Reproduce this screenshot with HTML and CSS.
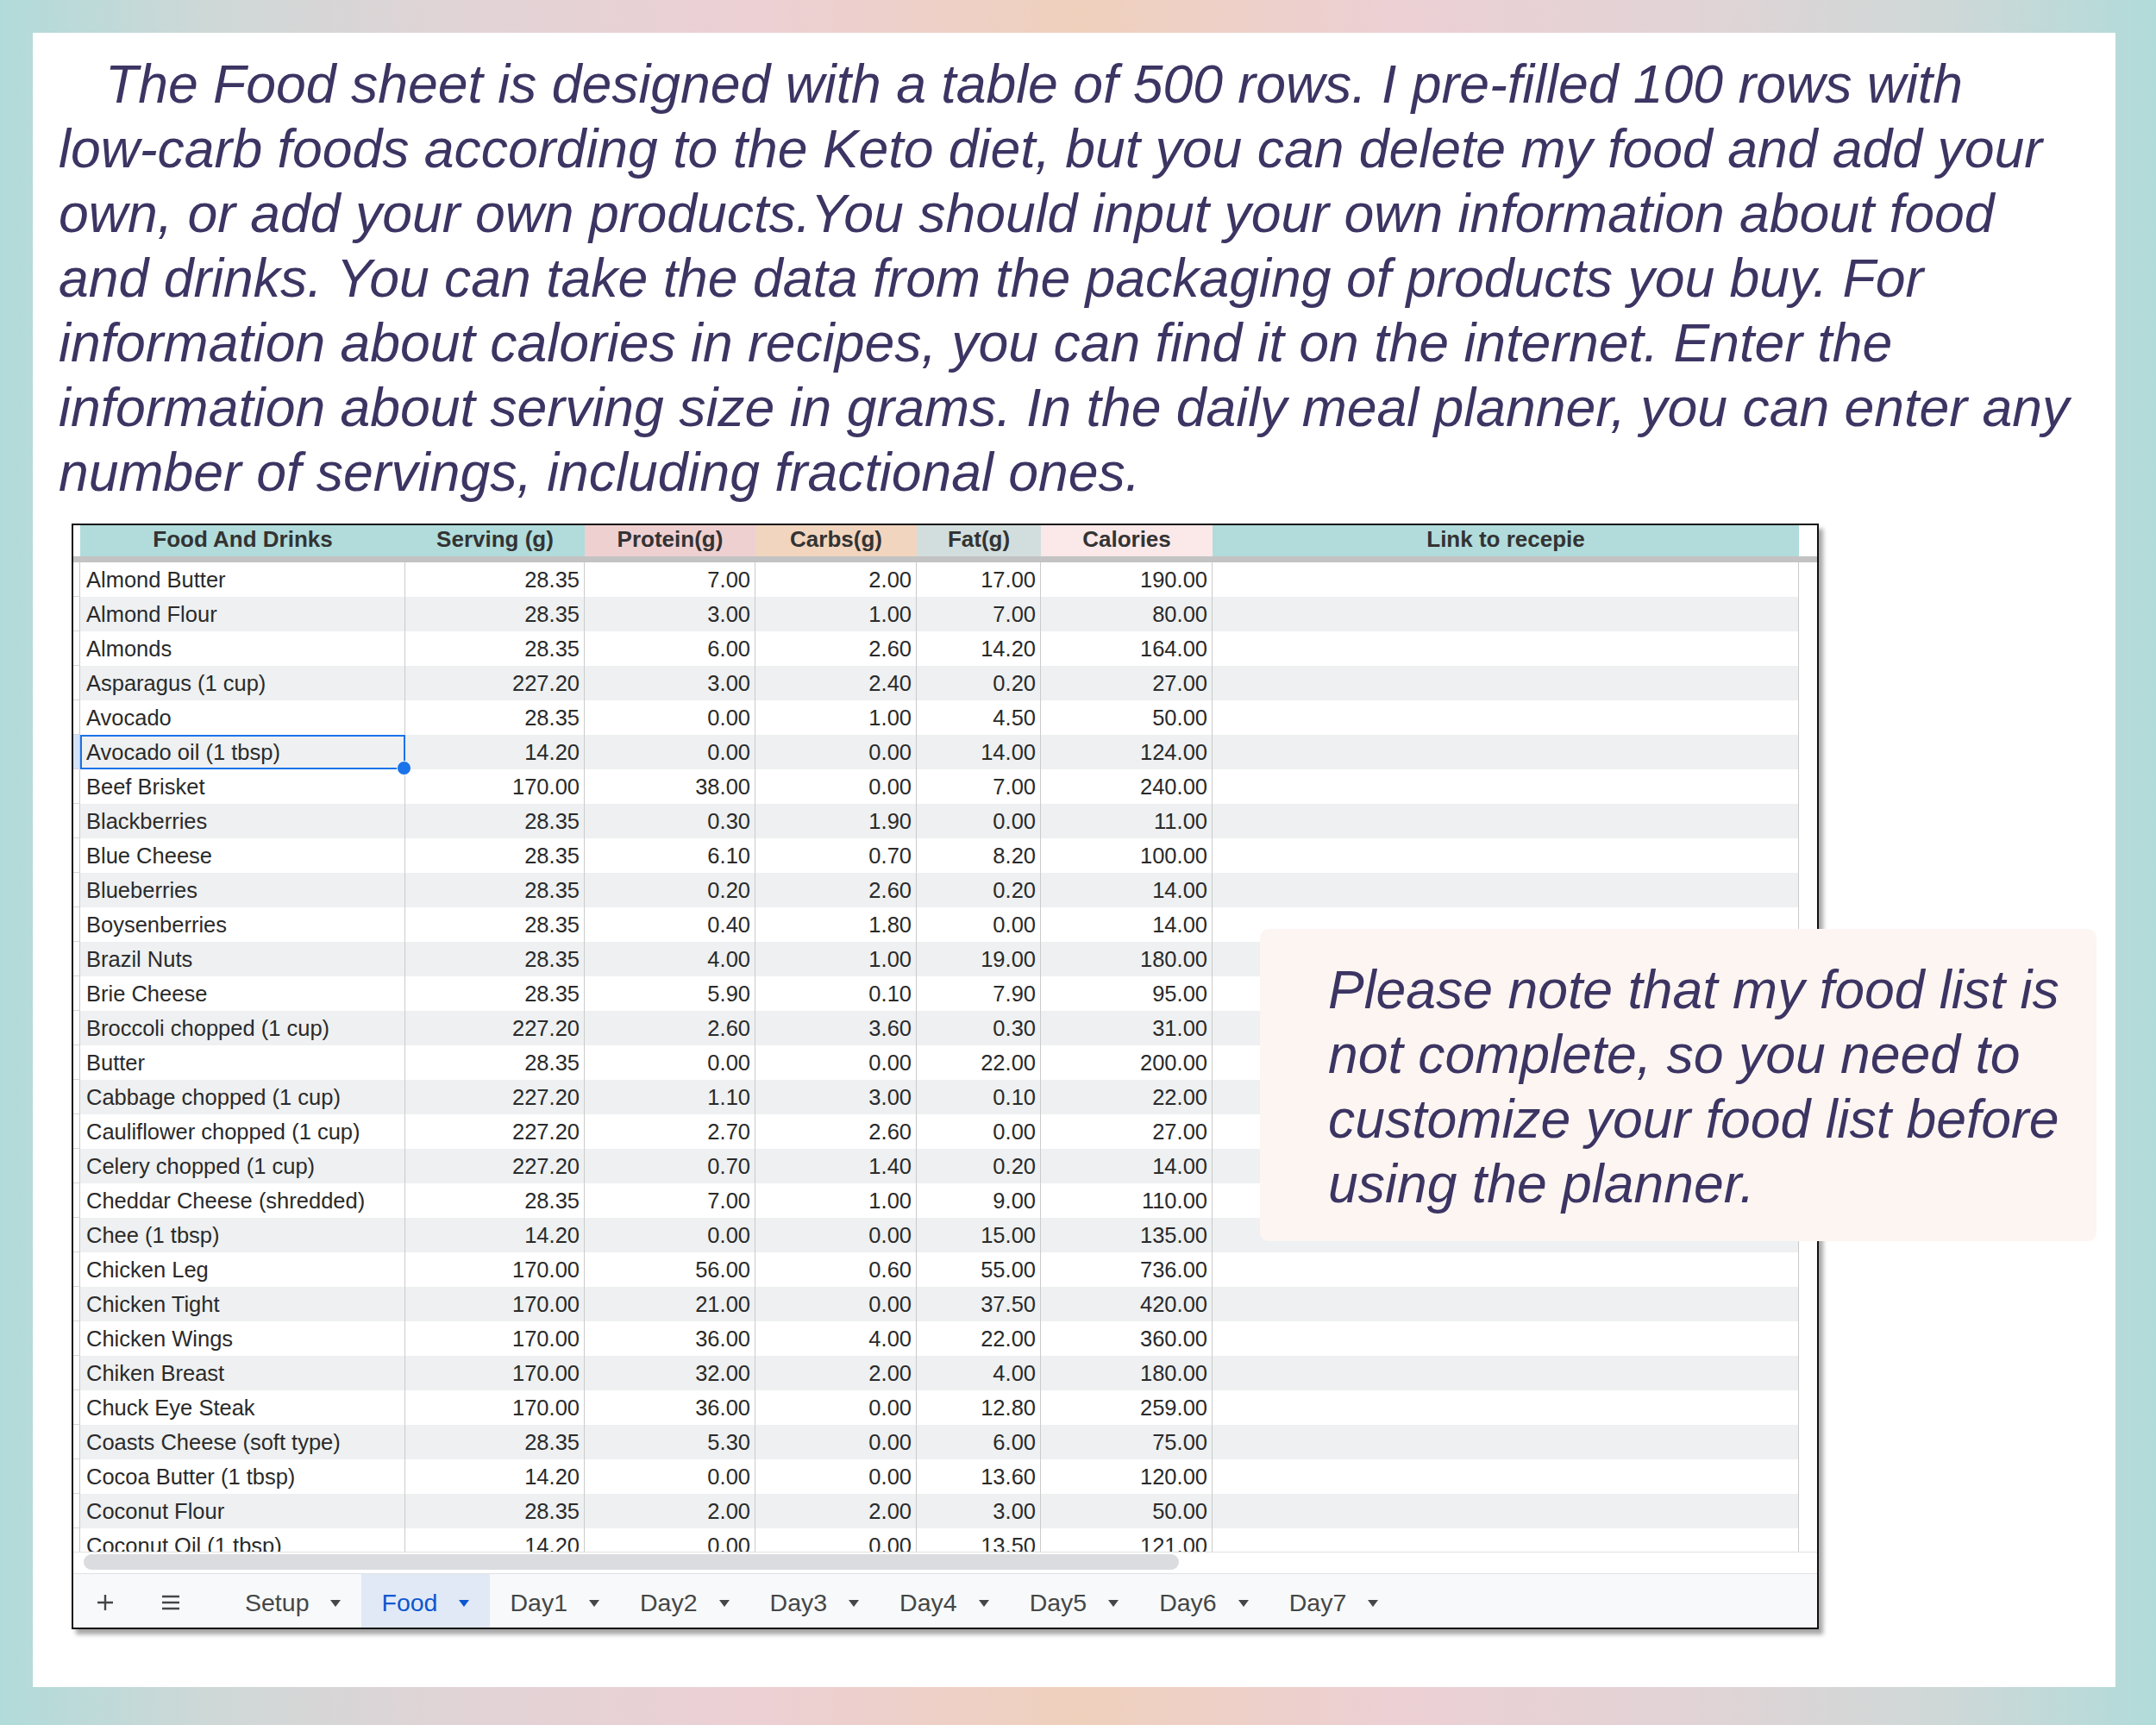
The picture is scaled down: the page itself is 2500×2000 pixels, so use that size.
FILE: index.html
```html
<!DOCTYPE html>
<html lang="en">
<head>
<meta charset="utf-8">
<title>Food sheet</title>
<link rel="stylesheet" href="styles.css">
</head>
<body>
<main class="card">
  <p class="intro">The Food sheet is designed with a table of 500 rows. I pre-filled 100 rows with<br>low-carb foods according to the Keto diet, but you can delete my food and add your<br>own, or add your own products.You should input your own information about food<br>and drinks. You can take the data from the packaging of products you buy. For<br>information about calories in recipes, you can find it on the internet. Enter the<br>information about serving size in grams. In the daily meal planner, you can enter any<br>number of servings, including fractional ones.</p>

  <section class="sheet">
    <div class="head">
      <div class="gut"></div>
      <div class="hd teal">Food And Drinks</div>
      <div class="hd teal">Serving (g)</div>
      <div class="hd rose">Protein(g)</div>
      <div class="hd peach">Carbs(g)</div>
      <div class="hd sage">Fat(g)</div>
      <div class="hd blush">Calories</div>
      <div class="hd teal">Link to recepie</div>
      <div class="gut-r"></div>
    </div>
    <div class="freeze"></div>
    <div class="rows">
      <div class="row"><div class="gut"></div><div class="c name">Almond Butter</div><div class="c">28.35</div><div class="c">7.00</div><div class="c">2.00</div><div class="c">17.00</div><div class="c">190.00</div><div class="c link"></div><div class="gut-r"></div></div>
      <div class="row"><div class="gut"></div><div class="c name">Almond Flour</div><div class="c">28.35</div><div class="c">3.00</div><div class="c">1.00</div><div class="c">7.00</div><div class="c">80.00</div><div class="c link"></div><div class="gut-r"></div></div>
      <div class="row"><div class="gut"></div><div class="c name">Almonds</div><div class="c">28.35</div><div class="c">6.00</div><div class="c">2.60</div><div class="c">14.20</div><div class="c">164.00</div><div class="c link"></div><div class="gut-r"></div></div>
      <div class="row"><div class="gut"></div><div class="c name">Asparagus (1 cup)</div><div class="c">227.20</div><div class="c">3.00</div><div class="c">2.40</div><div class="c">0.20</div><div class="c">27.00</div><div class="c link"></div><div class="gut-r"></div></div>
      <div class="row"><div class="gut"></div><div class="c name">Avocado</div><div class="c">28.35</div><div class="c">0.00</div><div class="c">1.00</div><div class="c">4.50</div><div class="c">50.00</div><div class="c link"></div><div class="gut-r"></div></div>
      <div class="row active"><div class="gut"></div><div class="c name selected">Avocado oil (1 tbsp)</div><div class="c">14.20</div><div class="c">0.00</div><div class="c">0.00</div><div class="c">14.00</div><div class="c">124.00</div><div class="c link"></div><div class="gut-r"></div></div>
      <div class="row"><div class="gut"></div><div class="c name">Beef Brisket</div><div class="c">170.00</div><div class="c">38.00</div><div class="c">0.00</div><div class="c">7.00</div><div class="c">240.00</div><div class="c link"></div><div class="gut-r"></div></div>
      <div class="row"><div class="gut"></div><div class="c name">Blackberries</div><div class="c">28.35</div><div class="c">0.30</div><div class="c">1.90</div><div class="c">0.00</div><div class="c">11.00</div><div class="c link"></div><div class="gut-r"></div></div>
      <div class="row"><div class="gut"></div><div class="c name">Blue Cheese</div><div class="c">28.35</div><div class="c">6.10</div><div class="c">0.70</div><div class="c">8.20</div><div class="c">100.00</div><div class="c link"></div><div class="gut-r"></div></div>
      <div class="row"><div class="gut"></div><div class="c name">Blueberries</div><div class="c">28.35</div><div class="c">0.20</div><div class="c">2.60</div><div class="c">0.20</div><div class="c">14.00</div><div class="c link"></div><div class="gut-r"></div></div>
      <div class="row"><div class="gut"></div><div class="c name">Boysenberries</div><div class="c">28.35</div><div class="c">0.40</div><div class="c">1.80</div><div class="c">0.00</div><div class="c">14.00</div><div class="c link"></div><div class="gut-r"></div></div>
      <div class="row"><div class="gut"></div><div class="c name">Brazil Nuts</div><div class="c">28.35</div><div class="c">4.00</div><div class="c">1.00</div><div class="c">19.00</div><div class="c">180.00</div><div class="c link"></div><div class="gut-r"></div></div>
      <div class="row"><div class="gut"></div><div class="c name">Brie Cheese</div><div class="c">28.35</div><div class="c">5.90</div><div class="c">0.10</div><div class="c">7.90</div><div class="c">95.00</div><div class="c link"></div><div class="gut-r"></div></div>
      <div class="row"><div class="gut"></div><div class="c name">Broccoli chopped (1 cup)</div><div class="c">227.20</div><div class="c">2.60</div><div class="c">3.60</div><div class="c">0.30</div><div class="c">31.00</div><div class="c link"></div><div class="gut-r"></div></div>
      <div class="row"><div class="gut"></div><div class="c name">Butter</div><div class="c">28.35</div><div class="c">0.00</div><div class="c">0.00</div><div class="c">22.00</div><div class="c">200.00</div><div class="c link"></div><div class="gut-r"></div></div>
      <div class="row"><div class="gut"></div><div class="c name">Cabbage chopped (1 cup)</div><div class="c">227.20</div><div class="c">1.10</div><div class="c">3.00</div><div class="c">0.10</div><div class="c">22.00</div><div class="c link"></div><div class="gut-r"></div></div>
      <div class="row"><div class="gut"></div><div class="c name">Cauliflower chopped (1 cup)</div><div class="c">227.20</div><div class="c">2.70</div><div class="c">2.60</div><div class="c">0.00</div><div class="c">27.00</div><div class="c link"></div><div class="gut-r"></div></div>
      <div class="row"><div class="gut"></div><div class="c name">Celery chopped (1 cup)</div><div class="c">227.20</div><div class="c">0.70</div><div class="c">1.40</div><div class="c">0.20</div><div class="c">14.00</div><div class="c link"></div><div class="gut-r"></div></div>
      <div class="row"><div class="gut"></div><div class="c name">Cheddar Cheese (shredded)</div><div class="c">28.35</div><div class="c">7.00</div><div class="c">1.00</div><div class="c">9.00</div><div class="c">110.00</div><div class="c link"></div><div class="gut-r"></div></div>
      <div class="row"><div class="gut"></div><div class="c name">Chee (1 tbsp)</div><div class="c">14.20</div><div class="c">0.00</div><div class="c">0.00</div><div class="c">15.00</div><div class="c">135.00</div><div class="c link"></div><div class="gut-r"></div></div>
      <div class="row"><div class="gut"></div><div class="c name">Chicken Leg</div><div class="c">170.00</div><div class="c">56.00</div><div class="c">0.60</div><div class="c">55.00</div><div class="c">736.00</div><div class="c link"></div><div class="gut-r"></div></div>
      <div class="row"><div class="gut"></div><div class="c name">Chicken Tight</div><div class="c">170.00</div><div class="c">21.00</div><div class="c">0.00</div><div class="c">37.50</div><div class="c">420.00</div><div class="c link"></div><div class="gut-r"></div></div>
      <div class="row"><div class="gut"></div><div class="c name">Chicken Wings</div><div class="c">170.00</div><div class="c">36.00</div><div class="c">4.00</div><div class="c">22.00</div><div class="c">360.00</div><div class="c link"></div><div class="gut-r"></div></div>
      <div class="row"><div class="gut"></div><div class="c name">Chiken Breast</div><div class="c">170.00</div><div class="c">32.00</div><div class="c">2.00</div><div class="c">4.00</div><div class="c">180.00</div><div class="c link"></div><div class="gut-r"></div></div>
      <div class="row"><div class="gut"></div><div class="c name">Chuck Eye Steak</div><div class="c">170.00</div><div class="c">36.00</div><div class="c">0.00</div><div class="c">12.80</div><div class="c">259.00</div><div class="c link"></div><div class="gut-r"></div></div>
      <div class="row"><div class="gut"></div><div class="c name">Coasts Cheese (soft type)</div><div class="c">28.35</div><div class="c">5.30</div><div class="c">0.00</div><div class="c">6.00</div><div class="c">75.00</div><div class="c link"></div><div class="gut-r"></div></div>
      <div class="row"><div class="gut"></div><div class="c name">Cocoa Butter (1 tbsp)</div><div class="c">14.20</div><div class="c">0.00</div><div class="c">0.00</div><div class="c">13.60</div><div class="c">120.00</div><div class="c link"></div><div class="gut-r"></div></div>
      <div class="row"><div class="gut"></div><div class="c name">Coconut Flour</div><div class="c">28.35</div><div class="c">2.00</div><div class="c">2.00</div><div class="c">3.00</div><div class="c">50.00</div><div class="c link"></div><div class="gut-r"></div></div>
      <div class="row"><div class="gut"></div><div class="c name">Coconut Oil (1 tbsp)</div><div class="c">14.20</div><div class="c">0.00</div><div class="c">0.00</div><div class="c">13.50</div><div class="c">121.00</div><div class="c link"></div><div class="gut-r"></div></div>
    </div>
    <div class="hscroll"><div class="thumb"></div></div>
    <nav class="tabs">
      <span class="tool">
        <svg width="22" height="22" viewBox="0 0 22 22"><path d="M11 2v18M2 11h18" stroke="#444746" stroke-width="2.4"/></svg>
      </span>
      <span class="tool menu">
        <svg width="24" height="20" viewBox="0 0 24 20"><path d="M2 3h20M2 10h20M2 17h20" stroke="#444746" stroke-width="2.4"/></svg>
      </span>
      <span class="tab">Setup<i class="caret"></i></span>
      <span class="tab current">Food<i class="caret"></i></span>
      <span class="tab">Day1<i class="caret"></i></span>
      <span class="tab">Day2<i class="caret"></i></span>
      <span class="tab">Day3<i class="caret"></i></span>
      <span class="tab">Day4<i class="caret"></i></span>
      <span class="tab">Day5<i class="caret"></i></span>
      <span class="tab">Day6<i class="caret"></i></span>
      <span class="tab">Day7<i class="caret"></i></span>
    </nav>
  </section>

  <aside class="note">Please note that my food list is<br>not complete, so you need to<br>customize your food list before<br>using the planner.</aside>
</main>
</body>
</html>
```

FILE: styles.css
```css
* { box-sizing: border-box; }

html, body { margin: 0; }

body {
  width: 2500px;
  height: 2000px;
  padding: 38px;
  background: linear-gradient(to right,
    #b1dbda 0%, #cfd8d7 10%, #e2d3d6 22%, #ecd0d4 35%,
    #efd0bd 50%, #ecd0d4 65%, #e2d3d6 78%, #cfd8d7 90%, #b1dbda 100%);
  font-family: "Liberation Sans", Arial, sans-serif;
}

.card {
  position: relative;
  width: 2415px;
  height: 1918px;
  background: #ffffff;
  padding: 22px 30px;
}

.intro {
  margin: 0;
  font-size: 62.5px;
  line-height: 75px;
  font-style: italic;
  color: #3c3563;
  text-indent: 54px;
  white-space: nowrap;
}

/* spreadsheet window */
.sheet {
  --cols: 8px 377px 208px 198px 187px 144px 199px 680px 1fr;
  margin: 22px 0 0 15px;
  width: 2026px;
  border: 2px solid #111;
  background: #fff;
  box-shadow: 5px 6px 5px rgba(0, 0, 0, 0.35);
  color: #2a2a2a;
}

.head {
  display: grid;
  grid-template-columns: var(--cols);
  height: 36px;
}

.hd {
  font-weight: bold;
  font-size: 26px;
  line-height: 32px;
  text-align: center;
  color: #333;
}

.teal  { background: #b1dcdb; }
.rose  { background: #efd0d1; }
.peach { background: #f2d5bf; }
.sage  { background: #d2dedd; }
.blush { background: #fbe8e9; }

.freeze {
  height: 7px;
  background: #c3c3c3;
}

.rows {
  height: 1147px;
  overflow: hidden;
}

.row {
  display: grid;
  grid-template-columns: var(--cols);
  height: 40px;
}

.row:nth-child(even) { background: #eef0f1; }

.row .gut {
  background: #fff;
  border-bottom: 1px solid #d6d6d6;
  border-right: 1px solid #c9c9c9;
}

.row.active .gut { background: #d3e3fd; }

.gut-r { background: #fff; }

.c {
  position: relative;
  font-size: 25.5px;
  line-height: 40px;
  text-align: right;
  padding: 0 5px 0 7px;
  border-right: 1px solid #cbcbcb;
  white-space: nowrap;
}

.c.name { text-align: left; }

.c.selected {
  border: 2px solid #1a73e8;
  line-height: 36px;
  padding-left: 5px;
}

.c.selected::after {
  content: "";
  position: absolute;
  right: -9px;
  bottom: -9px;
  width: 15px;
  height: 15px;
  border-radius: 50%;
  background: #1a73e8;
  border: 1px solid #fff;
  z-index: 2;
}

/* horizontal scrollbar */
.hscroll {
  height: 25px;
  border-top: 1px solid #e0e0e0;
  padding: 2px 0 0 12px;
}

.thumb {
  width: 1270px;
  height: 18px;
  border-radius: 9px;
  background: #dadce0;
}

/* sheet tabs */
.tabs {
  display: flex;
  align-items: stretch;
  height: 63px;
  border-top: 1px solid #dfe1e5;
  background: #f8f9fa;
  padding-left: 12px;
  font-size: 28.5px;
  color: #444746;
}

.tool {
  width: 50px;
  display: flex;
  align-items: center;
  justify-content: center;
  padding-top: 4px;
}

.tool.menu { margin-left: 26px; margin-right: 38px; }

.tab {
  display: flex;
  align-items: center;
  padding: 5px 24px 0 23px;
  white-space: nowrap;
}

.tab.current {
  background: #e1e9f7;
  color: #0b57d0;
}

.caret {
  margin-left: 25px;
  width: 0;
  height: 0;
  border-left: 6px solid transparent;
  border-right: 6px solid transparent;
  border-top: 8px solid currentColor;
}

/* callout over the sheet */
.note {
  position: absolute;
  left: 1423px;
  top: 1039px;
  width: 970px;
  height: 362px;
  padding: 33px 0 0 79px;
  background: #fdf5f1;
  border-radius: 10px;
  font-size: 62.5px;
  line-height: 75px;
  font-style: italic;
  color: #3c3563;
  white-space: nowrap;
}
```
